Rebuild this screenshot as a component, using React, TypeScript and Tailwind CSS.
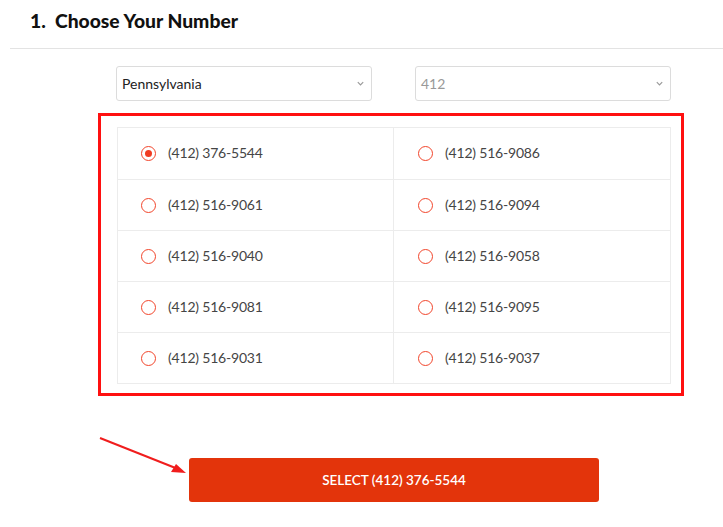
import React, { useState } from 'react';

const numbers = [
  ['(412) 376-5544', '(412) 516-9086'],
  ['(412) 516-9061', '(412) 516-9094'],
  ['(412) 516-9040', '(412) 516-9058'],
  ['(412) 516-9081', '(412) 516-9095'],
  ['(412) 516-9031', '(412) 516-9037'],
];

function Chevron() {
  return (
    <svg className="w-[9px] h-[9px] text-[#999]" viewBox="0 0 10 10" fill="none" stroke="currentColor" strokeWidth={1.3}>
      <path d="M2 3.5l3 3 3-3" />
    </svg>
  );
}

function Radio({ checked }: { checked: boolean }) {
  return (
    <span className="w-[15px] h-[15px] rounded-full border-[1.8px] border-[#f2452b] flex items-center justify-center shrink-0">
      {checked && <span className="w-[7px] h-[7px] rounded-full bg-[#f03c22]" />}
    </span>
  );
}

export default function App() {
  const [selected, setSelected] = useState('(412) 376-5544');

  return (
    <div className="w-[723px] h-[527px] bg-white relative overflow-hidden" style={{ fontFamily: 'Lato, "Open Sans", sans-serif' }}>
      <div className="pl-[30px] pt-[7px] h-[48px]">
        <h1 className="text-[19.3px] font-black text-[#111]">1.&nbsp; Choose Your Number</h1>
      </div>
      <div className="ml-[10px] border-t border-[#e3e3e3]" />

      <div className="ml-[98px] w-[586px] pt-[17px]">
        <div className="flex gap-[43px] pl-[18px]">
          <div className="w-[256px] h-[35px] border border-[#dcdcdc] rounded-[3px] flex items-center justify-between pl-[5px] pr-[6px]">
            <span className="text-[14px] text-[#222]">Pennsylvania</span>
            <Chevron />
          </div>
          <div className="w-[256px] h-[35px] border border-[#dcdcdc] rounded-[3px] flex items-center justify-between pl-[5px] pr-[6px]">
            <span className="text-[14px] text-[#999]">412</span>
            <Chevron />
          </div>
        </div>

        <div className="mt-[12px] border-[3px] border-[#ff1010] pl-[16px] pr-[10px] pt-[11px] pb-[9px]">
          <div className="border border-[#ececec] grid grid-cols-2">
            {numbers.map((row, i) =>
              row.map((n, j) => (
                <button
                  key={n}
                  onClick={() => setSelected(n)}
                  className={`h-[51px] flex items-center text-left ${j === 0 ? 'pl-[23px] border-r border-[#ececec]' : 'pl-[24px]'} ${i > 0 ? 'border-t border-[#ececec]' : ''}`}
                >
                  <Radio checked={selected === n} />
                  <span className="ml-[12px] text-[14px] text-[#454545] tracking-[-0.2px] -mt-[2px]">{n}</span>
                </button>
              ))
            )}
          </div>
        </div>

        <div className="mt-[62px] pl-[91px]">
          <button className="w-[410px] h-[44px] bg-[#e3340b] rounded-[3px] text-white text-[13.5px] font-semibold">
            SELECT {selected}
          </button>
        </div>
      </div>

      <svg className="absolute left-[98px] top-[436px]" width="92" height="40" viewBox="0 0 92 40" fill="none">
        <line x1="2" y1="2" x2="80" y2="33" stroke="#f01d1d" strokeWidth="2" />
        <path d="M88 37L73 36L78 28Z" fill="#f01d1d" />
      </svg>
    </div>
  );
}
